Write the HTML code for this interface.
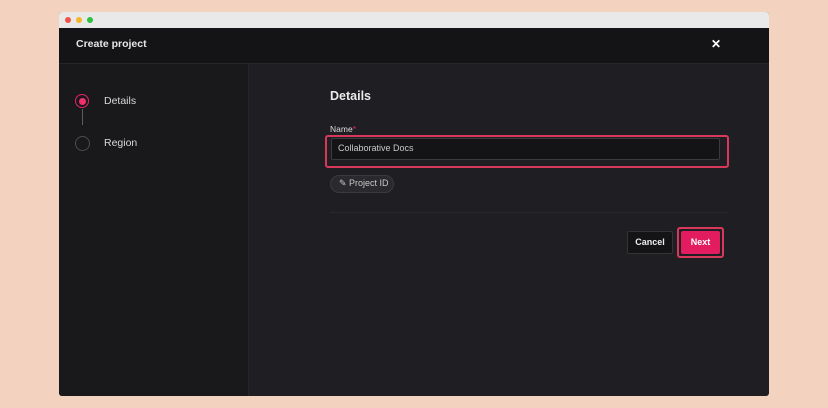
<!DOCTYPE html><html><head><style>
body{margin:0;width:828px;height:408px;background:#f3d3c0;font-family:"Liberation Sans",sans-serif;position:relative;overflow:hidden}
.a{position:absolute}
</style></head><body>
<div class="a" style="left:59px;top:12px;width:710px;height:384px;background:#1f1f23;overflow:hidden;border-radius:3px">
<div class="a" style="left:0;top:0;width:710px;height:16px;background:#e9e9e9"></div>
<div class="a" style="left:6px;top:5px;width:6px;height:6px;border-radius:50%;background:#f0534b"></div>
<div class="a" style="left:17px;top:5px;width:6px;height:6px;border-radius:50%;background:#f6b52a"></div>
<div class="a" style="left:28px;top:5px;width:6px;height:6px;border-radius:50%;background:#2cc13e"></div>
<div class="a" style="left:0;top:16px;width:710px;height:35px;background:#141416;border-bottom:1px solid #26262a"></div>
<div class="a" style="left:17px;top:26px;color:#e6e6e6;font-size:10.5px;font-weight:bold">Create project</div>
<div class="a" style="left:652px;top:25px;color:#fff;font-size:12px;font-weight:bold">✕</div>
<div class="a" style="left:0;top:52px;width:189px;height:332px;background:#19191c;border-right:1px solid #26262a"></div>
<div class="a" style="left:16px;top:82px;width:12px;height:12px;border-radius:50%;border:1.5px solid #e8245f"></div>
<div class="a" style="left:20px;top:86px;width:7px;height:7px;border-radius:50%;background:#f0306a"></div>
<div class="a" style="left:23px;top:97px;width:1px;height:16px;background:#5a5a5f"></div>
<div class="a" style="left:16px;top:124px;width:13px;height:13px;border-radius:50%;border:1px solid #4b4b50"></div>
<div class="a" style="left:45px;top:83px;color:#d8d8d8;font-size:10.5px">Details</div>
<div class="a" style="left:45px;top:125px;color:#d8d8d8;font-size:10.5px">Region</div>
<div class="a" style="left:271px;top:77px;color:#eaeaea;font-size:12.5px;font-weight:bold">Details</div>
<div class="a" style="left:271px;top:112px;color:#ddd;font-size:8.5px">Name<span style="color:#e8245f">*</span></div>
<div class="a" style="left:266px;top:123px;width:400px;height:29px;border:2px solid #d8385c;border-radius:3px"></div>
<div class="a" style="left:272px;top:126px;width:387px;height:20px;background:#141416;border:1px solid #3a3a3f;border-radius:2px"></div>
<div class="a" style="left:279px;top:131px;color:#c8c8c8;font-size:9px">Collaborative Docs</div>
<div class="a" style="left:271px;top:163px;width:64px;height:18px;background:#2a2a2e;border:1px solid #3a3a3f;border-radius:9px;box-sizing:border-box"></div>
<div class="a" style="left:280px;top:166px;color:#c8c8c8;font-size:9px">✎ Project ID</div>
<div class="a" style="left:271px;top:200px;width:399px;height:1px;background:#29292d"></div>
<div class="a" style="left:568px;top:219px;width:46px;height:23px;background:#141416;border:1px solid #333;box-sizing:border-box;border-radius:2px;color:#eee;font-size:9px;font-weight:bold;text-align:center;line-height:21px">Cancel</div>
<div class="a" style="left:618px;top:215px;width:47px;height:31px;border:2px solid #d8385c;border-radius:3px;box-sizing:border-box"></div>
<div class="a" style="left:622px;top:219px;width:39px;height:23px;background:#e31c5f;border-radius:2px;color:#fff;font-size:9px;font-weight:bold;text-align:center;line-height:23px">Next</div>
</div>
</body></html>
